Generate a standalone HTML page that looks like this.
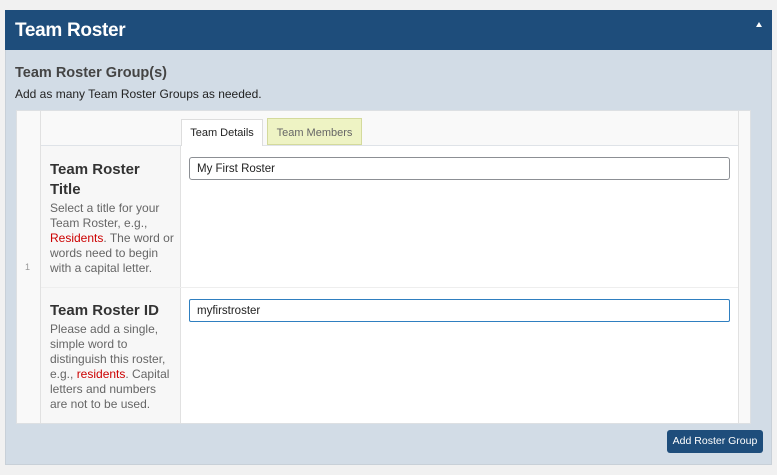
<!DOCTYPE html>
<html><head><style>
*{margin:0;padding:0;box-sizing:border-box}
body{width:777px;height:475px;background:#f1f1f1;font-family:"Liberation Sans",sans-serif;position:relative;overflow:hidden}
.a{position:absolute;white-space:nowrap}
.w{white-space:normal}
.panel{left:5px;top:10px;width:767px;height:455px;background:#d2dce6;border:1px solid #c8d0d8}
.hdr{left:5px;top:10px;width:767px;height:40px;background:#1e4d7b}
.hdr span{position:absolute;left:10px;top:10px;color:#fff;font-size:19px;font-weight:bold;letter-spacing:-0.3px}
.tri{left:756px;top:22px;width:0;height:0;border-left:3px solid transparent;border-right:3px solid transparent;border-bottom:5px solid #fff}
h2{position:absolute;left:15px;top:65px;font-size:14.5px;color:#444;font-weight:bold}
.sub{left:15px;top:87px;font-size:12px;color:#222}
.tbl{left:16px;top:110px;width:735px;height:314px;background:#f9f9f9;border:1px solid #dde0e3}
.lab{font-size:12px;color:#666;line-height:15px;width:126px}
.lt{font-size:15px;font-weight:bold;color:#333;line-height:20px}
.red{color:#cc0000}
.inp{background:#fff;border:1px solid #8c8f94;border-radius:3px;height:23px;font-size:11.5px;color:#222;padding:5px 7px}
</style></head><body>
<div class="a panel"></div>
<div class="a hdr"><span>Team Roster</span></div>
<div class="a tri"></div>
<h2>Team Roster Group(s)</h2>
<div class="a sub">Add as many Team Roster Groups as needed.</div>
<div class="a tbl"></div>
<div class="a" style="left:40px;top:111px;width:1px;height:312px;background:#e1e1e1"></div>
<div class="a" style="left:738px;top:111px;width:1px;height:312px;background:#e1e1e1"></div>
<div class="a" style="left:41px;top:145px;width:697px;height:1px;background:#dfe3e8"></div>
<div class="a" style="left:41px;top:146px;width:139px;height:277px;background:#f7f7f7"></div>
<div class="a" style="left:180px;top:146px;width:1px;height:277px;background:#e1e1e1"></div>
<div class="a" style="left:181px;top:146px;width:557px;height:277px;background:#fff"></div>
<div class="a" style="left:41px;top:287px;width:697px;height:1px;background:#eee"></div>
<div class="a" style="left:181px;top:119px;width:82px;height:27px;background:#fff;border:1px solid #ddd;border-bottom:none;font-size:11px;color:#222;padding:7px 0;text-align:center">Team Details</div>
<div class="a" style="left:267px;top:118px;width:95px;height:27px;background:#eef3c4;border:1px solid #d4da9c;font-size:11px;color:#666;padding:8px 0;text-align:center">Team Members</div>
<div class="a" style="left:25px;top:262px;font-size:9px;color:#999">1</div>
<div class="a w" style="left:50px;top:160px">
<div class="lt" style="width:100px">Team Roster Title</div>
<div class="lab" style="margin-top:1px">Select a title for your Team Roster, e.g., <span class="red">Residents</span>. The word or words need to begin with a capital letter.</div>
</div>
<div class="a w" style="left:50px;top:301px">
<div class="lt">Team Roster ID</div>
<div class="lab" style="margin-top:1px;width:122px">Please add a single, simple word to distinguish this roster, e.g., <span class="red">residents</span>. Capital letters and numbers are not to be used.</div>
</div>
<div class="a inp" style="left:189px;top:157px;width:541px">My First Roster</div>
<div class="a inp" style="left:189px;top:299px;width:541px;border-color:#2f7fc0;border-radius:2px">myfirstroster</div>
<div class="a" style="left:667px;top:430px;width:96px;height:23px;background:#1e4d7b;border-radius:3px;color:#fff;font-size:10.5px;text-align:center;line-height:23px">Add Roster Group</div>
</body></html>
